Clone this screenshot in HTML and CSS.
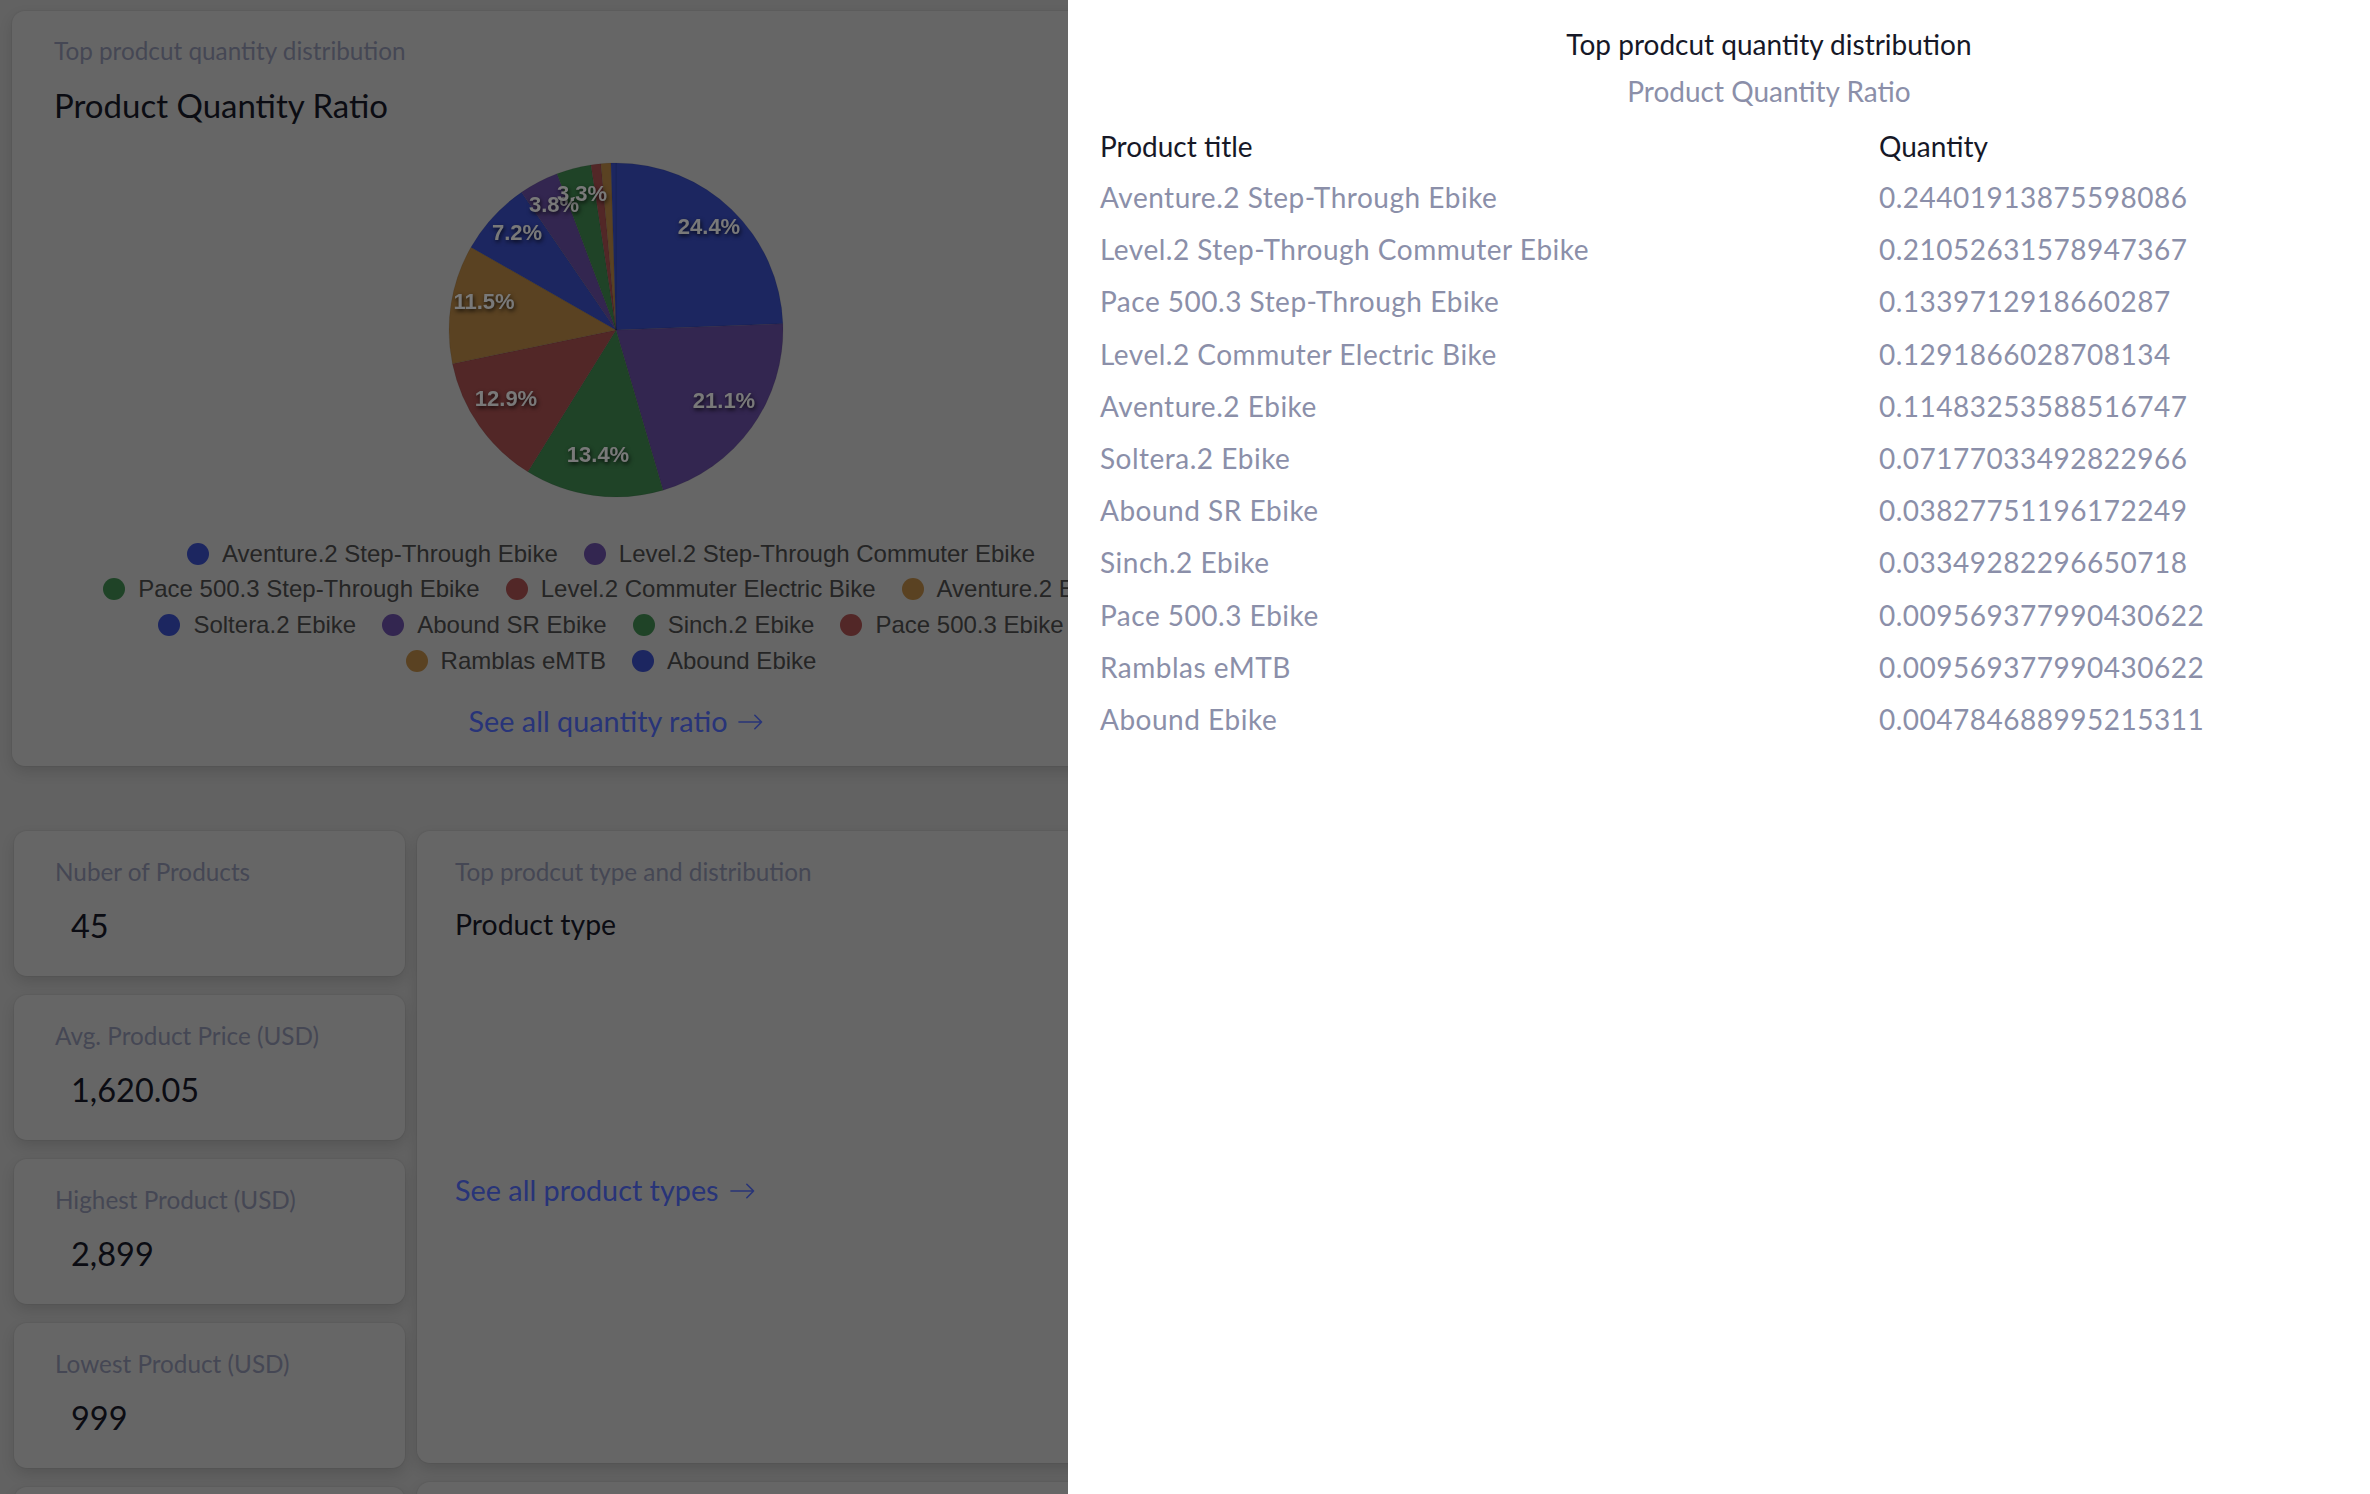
FILE: index.html
```html
<!DOCTYPE html>
<html lang="en">
<head>
<meta charset="utf-8">
<title>Products</title>
<link rel="stylesheet" href="styles.css">
</head>
<body>
<div class="page">
  <section class="card chart-card">
    <p class="kicker">Top prodcut quantity distribution</p>
    <h2 class="card-title">Product Quantity Ratio</h2>
    <svg class="pie" viewBox="0 0 1124 360" width="1124" height="360">
      <path class="c-blue" d="M562 180 L562 13 A167 167 0 0 1 728.88 173.73 Z"/>
      <path class="c-purple" d="M562 180 L728.88 173.73 A167 167 0 0 1 609.05 340.23 Z"/>
      <path class="c-green" d="M562 180 L609.05 340.23 A167 167 0 0 1 473.83 321.83 Z"/>
      <path class="c-red" d="M562 180 L473.83 321.83 A167 167 0 0 1 398.43 213.65 Z"/>
      <path class="c-orange" d="M562 180 L398.43 213.65 A167 167 0 0 1 416.96 97.22 Z"/>
      <path class="c-blue" d="M562 180 L416.96 97.22 A167 167 0 0 1 467.53 42.29 Z"/>
      <path class="c-purple" d="M562 180 L467.53 42.29 A167 167 0 0 1 503.04 23.75 Z"/>
      <path class="c-green" d="M562 180 L503.04 23.75 A167 167 0 0 1 536.99 14.88 Z"/>
      <path class="c-red" d="M562 180 L536.99 14.88 A167 167 0 0 1 546.96 13.68 Z"/>
      <path class="c-orange" d="M562 180 L546.96 13.68 A167 167 0 0 1 556.98 13.08 Z"/>
      <path class="c-blue" d="M562 180 L556.98 13.08 A167 167 0 0 1 562 13 Z"/>
      <g class="pie-labels">
        <text x="655" y="76">24.4%</text>
        <text x="670" y="250">21.1%</text>
        <text x="544" y="304">13.4%</text>
        <text x="452" y="248">12.9%</text>
        <text x="430" y="151">11.5%</text>
        <text x="463" y="82">7.2%</text>
        <text x="500" y="54">3.8%</text>
        <text x="528" y="43">3.3%</text>
      </g>
    </svg>
    <div class="legend">
      <div class="legend-row">
        <span class="legend-item"><i class="dot c-blue"></i>Aventure.2 Step-Through Ebike</span>
        <span class="legend-item"><i class="dot c-purple"></i>Level.2 Step-Through Commuter Ebike</span>
      </div>
      <div class="legend-row">
        <span class="legend-item"><i class="dot c-green"></i>Pace 500.3 Step-Through Ebike</span>
        <span class="legend-item"><i class="dot c-red"></i>Level.2 Commuter Electric Bike</span>
        <span class="legend-item"><i class="dot c-orange"></i>Aventure.2 Ebike</span>
      </div>
      <div class="legend-row">
        <span class="legend-item"><i class="dot c-blue"></i>Soltera.2 Ebike</span>
        <span class="legend-item"><i class="dot c-purple"></i>Abound SR Ebike</span>
        <span class="legend-item"><i class="dot c-green"></i>Sinch.2 Ebike</span>
        <span class="legend-item"><i class="dot c-red"></i>Pace 500.3 Ebike</span>
      </div>
      <div class="legend-row">
        <span class="legend-item"><i class="dot c-orange"></i>Ramblas eMTB</span>
        <span class="legend-item"><i class="dot c-blue"></i>Abound Ebike</span>
      </div>
    </div>
    <div class="link-wrap">
      <a class="see-all" href="#">See all quantity ratio
        <svg class="arrow" viewBox="0 0 26 16" width="25" height="16"><path d="M1 8H24.5M17.5 1 24.5 8 17.5 15"/></svg>
      </a>
    </div>
  </section>

  <div class="lower">
    <div class="stats">
      <section class="card stat">
        <p class="kicker">Nuber of Products</p>
        <p class="stat-value">45</p>
      </section>
      <section class="card stat">
        <p class="kicker">Avg. Product Price (USD)</p>
        <p class="stat-value">1,620.05</p>
      </section>
      <section class="card stat">
        <p class="kicker">Highest Product (USD)</p>
        <p class="stat-value">2,899</p>
      </section>
      <section class="card stat">
        <p class="kicker">Lowest Product (USD)</p>
        <p class="stat-value">999</p>
      </section>
      <section class="card stat"></section>
    </div>
    <div class="wide-col">
      <section class="card type-card">
        <p class="kicker">Top prodcut type and distribution</p>
        <h3 class="type-title">Product type</h3>
        <div class="type-chart"></div>
        <a class="see-all" href="#">See all product types
          <svg class="arrow" viewBox="0 0 26 16" width="25" height="16"><path d="M1 8H24.5M17.5 1 24.5 8 17.5 15"/></svg>
        </a>
      </section>
      <section class="card type-card"></section>
    </div>
  </div>
</div>

<div class="backdrop"></div>

<aside class="drawer">
  <header class="drawer-head">
    <h2 class="drawer-title">Top prodcut quantity distribution</h2>
    <p class="drawer-sub">Product Quantity Ratio</p>
  </header>
  <div class="qty-table">
    <div class="th">Product title</div><div class="th">Quantity</div>
    <div class="td">Aventure.2 Step-Through Ebike</div><div class="td">0.24401913875598086</div>
    <div class="td">Level.2 Step-Through Commuter Ebike</div><div class="td">0.21052631578947367</div>
    <div class="td">Pace 500.3 Step-Through Ebike</div><div class="td">0.1339712918660287</div>
    <div class="td">Level.2 Commuter Electric Bike</div><div class="td">0.1291866028708134</div>
    <div class="td">Aventure.2 Ebike</div><div class="td">0.11483253588516747</div>
    <div class="td">Soltera.2 Ebike</div><div class="td">0.07177033492822966</div>
    <div class="td">Abound SR Ebike</div><div class="td">0.03827751196172249</div>
    <div class="td">Sinch.2 Ebike</div><div class="td">0.03349282296650718</div>
    <div class="td">Pace 500.3 Ebike</div><div class="td">0.009569377990430622</div>
    <div class="td">Ramblas eMTB</div><div class="td">0.009569377990430622</div>
    <div class="td">Abound Ebike</div><div class="td">0.004784688995215311</div>
  </div>
</aside>
</body>
</html>
```

FILE: styles.css
```css
html, body {
  margin: 0;
  height: 100%;
  overflow: hidden;
}

body {
  background: #c4c4c4;
  font-family: Lato, "Open Sans", "Noto Sans", sans-serif;
  color: #161827;
}

.page {
  width: 1208px;
  padding: 11px 12px 0;
}

.card {
  background: #cdcdcd;
  border-radius: 13px;
  box-sizing: border-box;
  box-shadow: 0 0 0 1px rgba(0, 0, 0, 0.04), 0 6px 14px rgba(0, 0, 0, 0.13);
}

.chart-card {
  height: 755px;
  padding: 23px 42px 0;
}

.kicker {
  margin: 0;
  font-size: 24.3px;
  line-height: 34px;
  color: #8b8fa9;
}

.card-title {
  margin: 15px 0 0;
  font-size: 33px;
  line-height: 44px;
  font-weight: 400;
  color: #161827;
}

.pie {
  display: block;
  width: 1124px;
  height: 360px;
  margin-top: 23px;
}

.pie path {
  stroke: rgba(0, 0, 0, 0.08);
  stroke-width: 1;
}

.c-blue { fill: #384cc0; background: #384cc0; }
.c-purple { fill: #664ca0; background: #664ca0; }
.c-green { fill: #3e864e; background: #3e864e; }
.c-red { fill: #a44e4e; background: #a44e4e; }
.c-orange { fill: #b48444; background: #b48444; }

.pie-labels text {
  font-family: "Liberation Sans", Arial, sans-serif;
  font-weight: 700;
  font-size: 22px;
  fill: #f2f2f2;
  text-anchor: middle;
  dominant-baseline: central;
  filter: drop-shadow(1px 2px 2px rgba(0, 0, 0, 0.75));
}

.legend {
  margin-top: 26px;
  padding-right: 10px;
  display: flex;
  flex-direction: column;
  align-items: center;
  font-family: "Liberation Sans", Arial, sans-serif;
  font-size: 24px;
  color: #4a4a4a;
}

.legend-row {
  display: flex;
  align-items: center;
  gap: 26px;
  height: 35.6px;
  white-space: nowrap;
}

.legend-item {
  display: flex;
  align-items: center;
  gap: 13px;
}

.dot {
  display: block;
  width: 22px;
  height: 22px;
  border-radius: 50%;
}

.link-wrap {
  margin-top: 25px;
  text-align: center;
}

.see-all {
  display: inline-flex;
  align-items: center;
  gap: 11px;
  font-size: 28.8px;
  line-height: 36px;
  color: #5068f0;
  text-decoration: none;
}

.arrow {
  fill: none;
  stroke: currentColor;
  stroke-width: 1.7;
  stroke-linecap: round;
  stroke-linejoin: round;
  margin-top: 2px;
}

.lower {
  margin: 65px 0 0 2px;
  display: grid;
  grid-template-columns: 391px 803px;
  gap: 12px;
}

.stats,
.wide-col {
  display: flex;
  flex-direction: column;
  gap: 19px;
}

.stat {
  height: 145px;
  flex: none;
  padding: 24px 41px 0;
}

.stat-value {
  margin: 15px 0 0 16px;
  font-size: 32.5px;
  line-height: 44px;
  color: #161827;
}

.type-card {
  height: 632px;
  flex: none;
  padding: 24px 38px 0;
}

.type-title {
  margin: 15px 0 0;
  font-size: 28.4px;
  line-height: 40px;
  font-weight: 400;
  color: #161827;
}

.type-chart {
  height: 228px;
}

.backdrop {
  position: fixed;
  inset: 0;
  background: rgba(0, 0, 0, 0.5);
}

.drawer {
  position: fixed;
  top: 0;
  right: 0;
  bottom: 0;
  width: 1302px;
  box-sizing: border-box;
  padding: 24px 38px 24px 32px;
  background: #ffffff;
}

.drawer-head {
  padding-left: 106px;
  text-align: center;
}

.drawer-title {
  margin: 0;
  font-size: 28px;
  line-height: 40px;
  font-weight: 400;
  color: #161827;
}

.drawer-sub {
  margin: 7px 0 0;
  font-size: 28px;
  line-height: 40px;
  color: #8b8fa9;
}

.qty-table {
  margin-top: 10px;
  display: grid;
  grid-template-columns: 779px 1fr;
  grid-template-rows: 50px;
  grid-auto-rows: 52.2px;
  align-items: center;
  font-size: 28px;
}

.th {
  color: #161827;
}

.td {
  color: #8b8fa9;
  letter-spacing: 0.5px;
}
```
